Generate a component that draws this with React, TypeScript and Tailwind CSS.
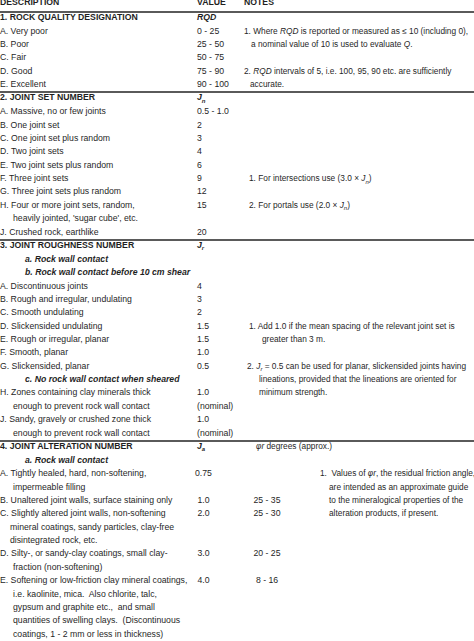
import type { ReactNode } from "react"

function Sub({ children }: { children: ReactNode }) {
  return <span className="relative top-[2.5px] text-[6px] leading-none">{children}</span>
}

function Sym({ s }: { s: string }) {
  return (
    <span className="font-bold italic">
      J<Sub>{s}</Sub>
    </span>
  )
}

type RowProps = {
  d?: ReactNode
  v?: ReactNode
  n?: ReactNode
  dc?: string
  nc?: string
}

// plain row of sections 1-3: description | value | notes
function Row({ d, v, n, dc = "", nc = "" }: RowProps) {
  return (
    <div className="grid h-[13.36px] grid-cols-[197px_47px_minmax(0,1fr)] leading-[13.36px]">
      <div className={dc}>{d}</div>
      <div>{v}</div>
      <div className={`text-[8.3px] ${nc}`}>{n}</div>
    </div>
  )
}

// section title row with the grey rule on top
function Head({ d, v, n, nc = "" }: RowProps) {
  return (
    <div className="grid h-[14px] grid-cols-[197px_47px_minmax(0,1fr)] border-t-2 border-[#5a5a5a] leading-[8px]">
      <div className="font-bold">{d}</div>
      <div>{v}</div>
      <div className={`text-[8.3px] ${nc}`}>{n}</div>
    </div>
  )
}

// section 4 rows: description | value | phi r | notes
function Row4({ d, v, p, n, dc = "", nc = "" }: RowProps & { p?: ReactNode }) {
  return (
    <div className="grid h-[13.36px] grid-cols-[186px_35px_92px_minmax(0,1fr)] leading-[13.36px]">
      <div className={dc}>{d}</div>
      <div className="text-center">{v}</div>
      <div className="text-center">{p}</div>
      <div className={`text-[8.3px] ${nc}`}>{n}</div>
    </div>
  )
}

const sub = "pl-[25px] font-bold italic"

export default function App() {
  return (
    <div className="h-[641px] w-[474px] overflow-hidden bg-white font-['Liberation_Sans',Arial,sans-serif] text-[8.7px] whitespace-pre text-[#1f1f1f]">
      <div className="grid h-[10.5px] grid-cols-[197px_47px_minmax(0,1fr)] font-bold leading-[5.4px]">
        <div>DESCRIPTION</div>
        <div>VALUE</div>
        <div>NOTES</div>
      </div>

      <Head d="1. ROCK QUALITY DESIGNATION" v={<span className="font-bold italic">RQD</span>} />
      <Row
        d="A. Very poor"
        v="0 - 25"
        n={
          <>
            1. Where <i>RQD</i> is reported or measured as ≤ 10 (including 0),
          </>
        }
      />
      <Row
        d="B. Poor"
        v="25 - 50"
        nc="pl-[7px]"
        n={
          <>
            a nominal value of 10 is used to evaluate <i>Q</i>.
          </>
        }
      />
      <Row d="C. Fair" v="50 - 75" />
      <Row
        d="D. Good"
        v="75 - 90"
        n={
          <>
            2. <i>RQD</i> intervals of 5, i.e. 100, 95, 90 etc. are sufficiently
          </>
        }
      />
      <Row d="E. Excellent" v="90 - 100" n="accurate." nc="pl-[6px]" />

      <Head d="2. JOINT SET NUMBER" v={<Sym s="n" />} />
      <Row d="A. Massive, no or few joints" v="0.5 - 1.0" />
      <Row d="B. One joint set" v="2" />
      <Row d="C. One joint set plus random" v="3" />
      <Row d="D. Two joint sets" v="4" />
      <Row d="E. Two joint sets plus random" v="6" />
      <Row
        d="F. Three joint sets"
        v="9"
        nc="pl-[5px]"
        n={
          <>
            1. For intersections use (3.0 × <i>J</i>
            <Sub>
              <i>n</i>
            </Sub>
            )
          </>
        }
      />
      <Row d="G. Three joint sets plus random" v="12" />
      <Row
        d="H. Four or more joint sets, random,"
        v="15"
        nc="pl-[5px]"
        n={
          <>
            2. For portals use (2.0 × <i>J</i>
            <Sub>
              <i>n</i>
            </Sub>
            )
          </>
        }
      />
      <Row d="heavily jointed, 'sugar cube', etc." dc="pl-[13px]" />
      <Row d="J. Crushed rock, earthlike" v="20" />

      <Head d="3. JOINT ROUGHNESS NUMBER" v={<Sym s="r" />} />
      <Row d="a. Rock wall contact" dc={sub} />
      <Row d="b. Rock wall contact before 10 cm shear" dc={sub} />
      <Row d="A. Discontinuous joints" v="4" />
      <Row d="B. Rough and irregular, undulating" v="3" />
      <Row d="C. Smooth undulating" v="2" />
      <Row
        d="D. Slickensided undulating"
        v="1.5"
        nc="pl-[5px]"
        n="1. Add 1.0 if the mean spacing of the relevant joint set is"
      />
      <Row d="E. Rough or irregular, planar" v="1.5" nc="pl-[18px]" n="greater than 3 m." />
      <Row d="F. Smooth, planar" v="1.0" />
      <Row
        d="G. Slickensided, planar"
        v="0.5"
        nc="pl-[3px]"
        n={
          <>
            2. <i>J</i>
            <Sub>
              <i>r</i>
            </Sub>{" "}
            = 0.5 can be used for planar, slickensided joints having
          </>
        }
      />
      <Row
        d="c. No rock wall contact when sheared"
        dc={sub}
        nc="pl-[15px]"
        n="lineations, provided that the lineations are oriented for"
      />
      <Row d="H. Zones containing clay minerals thick" v="1.0" nc="pl-[15px]" n="minimum strength." />
      <Row d="enough to prevent rock wall contact" dc="pl-[13px]" v="(nominal)" />
      <Row d="J. Sandy, gravely or crushed zone thick" v="1.0" />
      <Row d="enough to prevent rock wall contact" dc="pl-[13px]" v="(nominal)" />

      <Head
        d="4. JOINT ALTERATION NUMBER"
        v={<Sym s="a" />}
        nc="pl-[12px]"
        n={
          <>
            <i>φr</i> degrees (approx.)
          </>
        }
      />
      <Row4 d="a. Rock wall contact" dc={sub} />
      <Row4
        d="A. Tightly healed, hard, non-softening,"
        v="0.75"
        nc="pl-[7px]"
        n={
          <>
            1.  Values of <i>φr</i>, the residual friction angle,
          </>
        }
      />
      <Row4 d="impermeable filling" dc="pl-[13px]" nc="pl-[16px]" n="are intended as an approximate guide" />
      <Row4
        d="B. Unaltered joint walls, surface staining only"
        v="1.0"
        p="25 - 35"
        nc="pl-[16px]"
        n="to the mineralogical properties of the"
      />
      <Row4
        d="C. Slightly altered joint walls, non-softening"
        v="2.0"
        p="25 - 30"
        nc="pl-[16px]"
        n="alteration products, if present."
      />
      <Row4 d="mineral coatings, sandy particles, clay-free" dc="pl-[10px]" />
      <Row4 d="disintegrated rock, etc." dc="pl-[10px]" />
      <Row4 d="D. Silty-, or sandy-clay coatings, small clay-" v="3.0" p="20 - 25" />
      <Row4 d="fraction (non-softening)" dc="pl-[13px]" />
      <Row4 d="E. Softening or low-friction clay mineral coatings," v="4.0" p="8 - 16" />
      <Row4 d="i.e. kaolinite, mica.  Also chlorite, talc," dc="pl-[13px]" />
      <Row4 d="gypsum and graphite etc.,  and small" dc="pl-[13px]" />
      <Row4 d="quantities of swelling clays.  (Discontinuous" dc="pl-[13px]" />
      <Row4 d="coatings, 1 - 2 mm or less in thickness)" dc="pl-[13px]" />
    </div>
  )
}
